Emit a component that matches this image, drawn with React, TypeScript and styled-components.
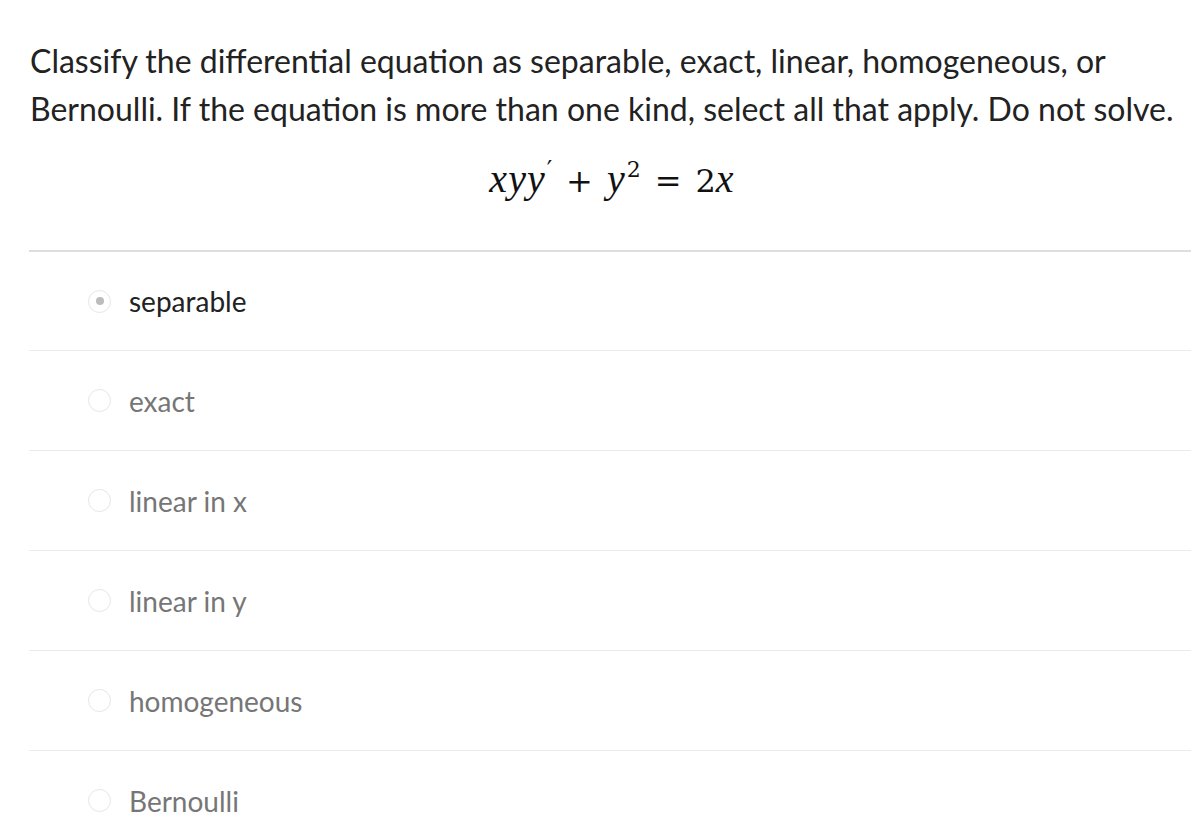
import React, { FC } from 'react'
import styled, { createGlobalStyle } from 'styled-components'

const GlobalStyle = createGlobalStyle`
  body {
    margin: 0;
    background: #fff;
    font-family: Lato, "Open Sans", sans-serif;
  }
`

interface OptionProps {
  selected?: boolean
}

const options = ['separable', 'exact', 'linear in x', 'linear in y', 'homogeneous', 'Bernoulli']

const App: FC = () => {
  return (
    <Page>
      <GlobalStyle />
      <Question>
        Classify the differential equation as separable, exact, linear, homogeneous, or Bernoulli. If the equation is
        more than one kind, select all that apply. Do not solve.
      </Question>
      <Equation>
        <I>x</I><I>y</I><I>y</I><Prime>′</Prime>
        <Op>+</Op>
        <I>y</I><Sup>2</Sup>
        <Op>=</Op>
        <span>2</span><I>x</I>
      </Equation>
      <List>
        {options.map((o, i) => (
          <Row key={o} first={i === 0}>
            <Radio selected={i === 0} />
            <Label selected={i === 0}>{o}</Label>
          </Row>
        ))}
      </List>
    </Page>
  )
}

export default App

const Page = styled.div`
  padding: 37px 3px 0 29px;
  width: 1162px;
`

const Question = styled.p`
  margin: 0;
  padding-left: 1px;
  font-size: 32px;
  line-height: 48px;
  color: #222;
  width: 1160px;
`

const Equation = styled.div`
  display: flex;
  justify-content: center;
  align-items: baseline;
  margin: 22px 0 0;
  height: 95px;
  padding-left: 4px;
  font-family: "DejaVu Serif", "Liberation Serif", serif;
  font-size: 32px;
  color: #111;
`

const I = styled.span`
  font-style: italic;
  font-family: "Liberation Serif", serif;
  font-size: 40px;
  letter-spacing: 1px;
`

const Prime = styled.span`
  font-size: 24px;
  position: relative;
  top: -14px;
  margin-left: 1px;
`

const Sup = styled.span`
  font-size: 22px;
  position: relative;
  top: -15px;
  margin-left: 1px;
`

const Op = styled.span`
  margin: 0 14px;
`

const List = styled.div`
  display: flex;
  flex-direction: column;
`

const Row = styled.div<{ first: boolean }>`
  display: flex;
  align-items: center;
  height: 100px;
  box-sizing: border-box;
  border-top: ${({ first }) => (first ? '2px solid #dedede' : '1px solid #ebebeb')};
  padding-left: 59px;
  gap: 18px;
`

const Radio = styled.span<OptionProps>`
  width: 23px;
  height: 23px;
  border-radius: 50%;
  border: 1px solid #e6e6e6;
  box-sizing: border-box;
  display: flex;
  align-items: center;
  justify-content: center;
  &::after {
    content: '';
    width: 8px;
    height: 8px;
    border-radius: 50%;
    background: ${({ selected }) => (selected ? '#bcbcbc' : 'transparent')};
  }
`

const Label = styled.span<OptionProps>`
  font-size: 28px;
  color: ${({ selected }) => (selected ? '#222' : '#767676')};
`
